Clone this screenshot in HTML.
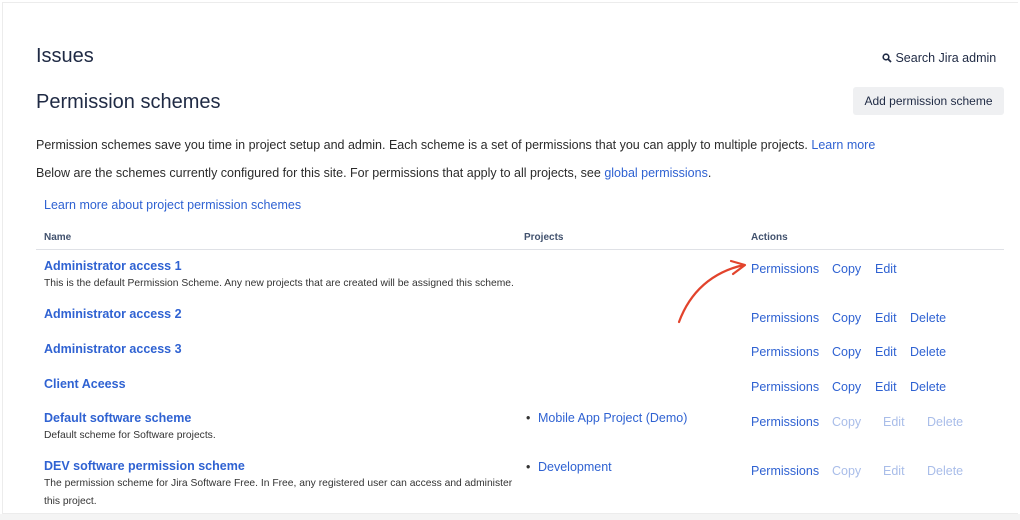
<!DOCTYPE html>
<html><head><meta charset="utf-8"><style>
*{margin:0;padding:0;box-sizing:border-box}
body{width:1020px;height:520px;overflow:hidden;background:#fff;font-family:"Liberation Sans",sans-serif;color:#172b4d;position:relative}
.frame{position:absolute;left:2px;top:2px;width:1016px;height:512px;border:1px solid #ececec;border-right:none}
.a{position:absolute;white-space:nowrap;line-height:1}
.p{font-size:12.5px;color:#2b2b2b}
.n{font-weight:bold;font-size:12.5px;color:#2f62d2}
.s{font-size:10.3px;color:#333}
.h{font-size:10px;font-weight:bold;color:#42526e}
.act{font-size:12.5px}
.l{color:#2f62d2}
.d{color:#a9bde9}
</style></head><body>
<div class="frame"></div>
<div class="a" style="left:36px;top:46px;font-size:20px;color:#1f2a44">Issues</div>
<div class="a" style="left:882px;top:52px;font-size:12.5px;color:#1f2a44">
<svg width="10" height="10" viewBox="0 0 10 10" style="vertical-align:-1px"><circle cx="4" cy="4" r="2.8" fill="none" stroke="#1f2a44" stroke-width="1.6"/><path d="M6 6l3 3" stroke="#1f2a44" stroke-width="1.8"/></svg>&nbsp;Search Jira admin</div>
<div class="a" style="left:36px;top:92px;font-size:20px;color:#1f2a44">Permission schemes</div>
<div class="a" style="left:853px;top:87px;width:151px;height:28px;background:#eff0f2;border-radius:3px;font-size:12px;color:#1f2a44;text-align:center;line-height:28px">Add permission scheme</div>
<div class="a p" style="left:36px;top:139px">Permission schemes save you time in project setup and admin. Each scheme is a set of permissions that you can apply to multiple projects. <span class="l">Learn more</span></div>
<div class="a p" style="left:36px;top:167px">Below are the schemes currently configured for this site. For permissions that apply to all projects, see <span class="l">global permissions</span>.</div>
<div class="a p l" style="left:44px;top:199px">Learn more about project permission schemes</div>
<div class="a h" style="left:44px;top:233px">Name</div>
<div class="a h" style="left:524px;top:233px">Projects</div>
<div class="a h" style="left:751px;top:233px">Actions</div>
<div class="a" style="left:36px;top:249px;width:968px;height:1px;background:#dfe1e6"></div>

<div class="a n" style="left:44px;top:260px">Administrator access 1</div>
<div class="a s" style="left:44px;top:279px">This is the default Permission Scheme. Any new projects that are created will be assigned this scheme.</div>
<div class="a n" style="left:44px;top:308px">Administrator access 2</div>
<div class="a n" style="left:44px;top:343px">Administrator access 3</div>
<div class="a n" style="left:44px;top:378px">Client Aceess</div>
<div class="a n" style="left:44px;top:412px">Default software scheme</div>
<div class="a s" style="left:44px;top:431px">Default scheme for Software projects.</div>
<div class="a n" style="left:44px;top:460px">DEV software permission scheme</div>
<div class="a s" style="left:44px;top:479px">The permission scheme for Jira Software Free. In Free, any registered user can access and administer</div>
<div class="a s" style="left:44px;top:497px">this project.</div>

<div class="a act" style="left:526px;top:412px;color:#333">•</div><div class="a act l" style="left:538px;top:412px">Mobile App Project (Demo)</div>
<div class="a act" style="left:526px;top:461px;color:#333">•</div><div class="a act l" style="left:538px;top:461px">Development</div>

<div class="a act l" style="left:751px;top:263px">Permissions</div><div class="a act l" style="left:832px;top:263px">Copy</div><div class="a act l" style="left:875px;top:263px">Edit</div>
<div class="a act l" style="left:751px;top:312px">Permissions</div><div class="a act l" style="left:832px;top:312px">Copy</div><div class="a act l" style="left:875px;top:312px">Edit</div><div class="a act l" style="left:910px;top:312px">Delete</div>
<div class="a act l" style="left:751px;top:346px">Permissions</div><div class="a act l" style="left:832px;top:346px">Copy</div><div class="a act l" style="left:875px;top:346px">Edit</div><div class="a act l" style="left:910px;top:346px">Delete</div>
<div class="a act l" style="left:751px;top:381px">Permissions</div><div class="a act l" style="left:832px;top:381px">Copy</div><div class="a act l" style="left:875px;top:381px">Edit</div><div class="a act l" style="left:910px;top:381px">Delete</div>
<div class="a act l" style="left:751px;top:416px">Permissions</div><div class="a act d" style="left:832px;top:416px">Copy</div><div class="a act d" style="left:883px;top:416px">Edit</div><div class="a act d" style="left:927px;top:416px">Delete</div>
<div class="a act l" style="left:751px;top:465px">Permissions</div><div class="a act d" style="left:832px;top:465px">Copy</div><div class="a act d" style="left:883px;top:465px">Edit</div><div class="a act d" style="left:927px;top:465px">Delete</div>

<svg class="a" style="left:0;top:0" width="1020" height="520">
<path d="M679 322 C690 292 712 272 744 265" fill="none" stroke="#e2432c" stroke-width="2.2" stroke-linecap="round"/>
<path d="M731 261 L745 265 L733 274" fill="none" stroke="#e2432c" stroke-width="2.2" stroke-linecap="round" stroke-linejoin="round"/>
</svg>
<div class="a" style="left:0;top:514px;width:1020px;height:6px;background:#f4f4f4"></div>
</body></html>
